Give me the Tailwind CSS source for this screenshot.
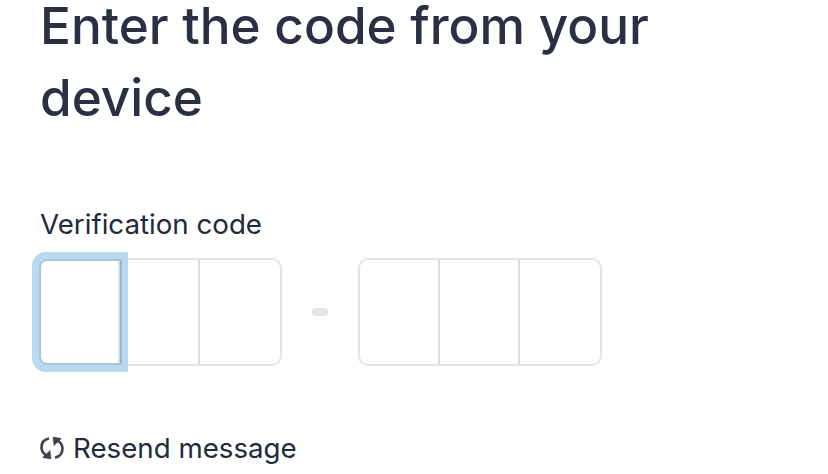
<!DOCTYPE html>
<html>
<head>
<meta charset="utf-8">
<script src="https://cdn.jsdelivr.net/npm/@tailwindcss/browser@4"></script>
</head>
<body class="bg-white overflow-hidden font-['Inter',sans-serif] w-[828px] h-[474px]">
<main class="pl-[40px] h-[474px] overflow-hidden">
  <h1 class="text-[51.25px] leading-[72px] font-[450] text-[#2a3042] mt-[-11px] w-[700px]">Enter the code from your device</h1>
  <label class="block mt-[73px] text-[27.7px] leading-[36px] font-normal text-[#232a3a]">Verification code</label>
  <div class="flex items-center mt-[16px] ml-[-2px]">
    <div class="relative flex w-[244px] h-[108px] border-2 border-[#e2e3e4] rounded-[10px]">
      <div class="absolute left-[-8px] top-[-8px] w-[96px] h-[120px] rounded-l-[14px] border-y-[7px] border-l-[7px] border-r-[6px] border-[#b9d9ee] z-10">
        <div class="w-full h-full rounded-l-[8px] border-2 border-r-[#8fb8d2] border-[#a3c6dc] bg-transparent"></div>
      </div>
      <div class="w-[78px]"></div>
      <div class="w-[80px] border-l-2 border-[#dcdddd]"></div>
      <div class="flex-1 border-l-2 border-[#dcdddd]"></div>
    </div>
    <div class="w-[16px] h-[8px] bg-[#e3e6e8] rounded-full ml-[30px] mr-[30px]"></div>
    <div class="flex w-[244px] h-[108px] border-2 border-[#e2e3e4] rounded-[10px]">
      <div class="w-[78px]"></div>
      <div class="w-[80px] border-l-2 border-[#dcdddd]"></div>
      <div class="flex-1 border-l-2 border-[#dcdddd]"></div>
    </div>
  </div>
  <div class="flex items-center mt-[64px] h-[36px] text-[27.7px] leading-[36px] font-normal text-[#232a3a]">
    <svg class="w-[32px] h-[32px] mr-[5px] ml-[-4px] shrink-0" viewBox="0 0 32 32" fill="none" stroke="#3a4150" stroke-width="2.6">
      <path d="M13 6.500 C7 7.500 5.500 12 5.500 15.500 C5.500 18.500 6.500 20.500 9.500 23"/>
      <path d="M15 27 L6.500 25.500 L14 18.500 Z" fill="#3a4150" stroke-width="0.5"/>
      <path d="M19 25.500 C25 24.500 26.500 20 26.500 16.500 C26.500 13.500 25.500 11.500 22.500 9"/>
      <path d="M17 5 L25.500 6.500 L18 13.500 Z" fill="#3a4150" stroke-width="0.5"/>
    </svg>
    <span>Resend message</span>
  </div>
</main>
</body>
</html>
